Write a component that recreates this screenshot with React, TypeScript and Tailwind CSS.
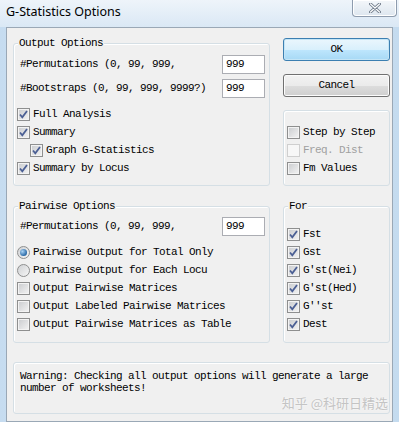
import React from "react";

const mono = "font-['Liberation_Mono',monospace] text-[11px] tracking-[-0.6px] text-black";

function Check({ checked, disabled }: { checked?: boolean; disabled?: boolean }) {
  return (
    <span
      className={`flex h-[13px] w-[13px] shrink-0 items-center justify-center border ${
        disabled
          ? "border-[#cfcfcf] bg-[#f7f7f7]"
          : "border-[#8e8f8f] bg-[linear-gradient(135deg,#c9cbce,#f4f4f4)] shadow-[inset_0_0_0_1px_#f3f3f3]"
      }`}
    >
      {checked && (
        <svg width="11" height="11" viewBox="0 0 11 11">
          <path d="M2 5.5 L4.3 8.3 L9 2" fill="none" stroke="#4b5f94" strokeWidth="1.8" />
        </svg>
      )}
    </span>
  );
}

function Radio({ checked }: { checked?: boolean }) {
  return (
    <span className="flex h-[13px] w-[13px] shrink-0 items-center justify-center rounded-full border border-[#8e8f8f] bg-[linear-gradient(135deg,#cfd1d4,#f6f6f6)]">
      {checked && (
        <span className="h-[7px] w-[7px] rounded-full bg-[radial-gradient(circle_at_35%_35%,#a9d3f5,#2a6aa8_70%,#1b4d82)]" />
      )}
    </span>
  );
}

function CheckRow({
  label,
  checked,
  disabled,
  indent,
}: {
  label: string;
  checked?: boolean;
  disabled?: boolean;
  indent?: boolean;
}) {
  return (
    <div className={`flex h-[18px] items-center gap-[3px] ${indent ? "pl-[16px]" : "pl-[3px]"}`}>
      <Check checked={checked} disabled={disabled} />
      <span className={`${mono} ${disabled ? "!text-[#a0a0a0]" : ""}`}>{label}</span>
    </div>
  );
}

function RadioRow({ label, checked }: { label: string; checked?: boolean }) {
  return (
    <div className="flex h-[18px] items-center gap-[3px] pl-[3px]">
      <Radio checked={checked} />
      <span className={mono}>{label}</span>
    </div>
  );
}

function Group({
  label,
  className,
  children,
}: {
  label?: string;
  className: string;
  children: React.ReactNode;
}) {
  return (
    <div
      className={`relative rounded-[3px] border border-[#d5dfe5] shadow-[inset_1px_1px_0_#ffffff] ${className}`}
    >
      {label && (
        <span className={`${mono} absolute -top-[8px] left-[4px] bg-[#f0f0f0] px-[1px] leading-[14px]`}>
          {label}
        </span>
      )}
      {children}
    </div>
  );
}

function NumRow({ label }: { label: string }) {
  return (
    <div className="flex h-[19px] items-center justify-between pl-[6px] pr-[4px]">
      <span className={mono}>{label}</span>
      <div className="flex h-[19px] w-[43px] items-center border border-[#abadb3] bg-white pl-[3px]">
        <span className={mono}>999</span>
      </div>
    </div>
  );
}

export default function App() {
  return (
    <div className="h-[422px] w-[399px] overflow-hidden bg-[linear-gradient(90deg,#c6dcf0,#d8e8f6_30%,#cfe2f3_70%,#c4dbef)]">
      <div className="flex h-[27px] items-start justify-between bg-[linear-gradient(180deg,#eef4fa,#dae8f5)]">
        <span className="pl-[6px] pt-[3px] font-['Noto_Sans',sans-serif] text-[12.5px] leading-[18px] text-black">
          G-Statistics Options
        </span>
        <div className="mr-[2px] flex h-[17px] w-[45px] items-center justify-center rounded-b-[4px] border border-t-0 border-[#8e9cae] bg-[linear-gradient(180deg,#f4f7fa,#dde6ef)] shadow-[inset_0_0_0_1px_#ffffff]">
          <svg width="12" height="10" viewBox="0 0 12 10">
            <path d="M1.5 1 L10.5 9 M10.5 1 L1.5 9" stroke="#6f7b8a" strokeWidth="3" strokeLinecap="round" />
            <path d="M1.5 1 L10.5 9 M10.5 1 L1.5 9" stroke="#ffffff" strokeWidth="1.2" strokeLinecap="round" />
          </svg>
        </div>
      </div>

      <div className="mx-[6px] h-[395px] border border-[#9aa8b6] bg-[#f0f0f0] pl-[6px]">
        <div className="flex gap-[13px]">
          <div className="flex w-[257px] flex-col">
            <Group label="Output Options" className="mt-[15px] h-[143px] pt-[11px]">
              <NumRow label="#Permutations (0, 99, 999," />
              <div className="mt-[5px]">
                <NumRow label="#Bootstraps (0, 99, 999, 9999?)" />
              </div>
              <div className="mt-[7px]">
                <CheckRow label="Full Analysis" checked />
                <CheckRow label="Summary" checked />
                <CheckRow label="Graph G-Statistics" checked indent />
                <CheckRow label="Summary by Locus" checked />
              </div>
            </Group>
            <Group label="Pairwise Options" className="mt-[20px] h-[137px] pt-[10px]">
              <NumRow label="#Permutations (0, 99, 999," />
              <div className="mt-[7px]">
                <RadioRow label="Pairwise Output for Total Only" checked />
                <RadioRow label="Pairwise Output for Each Locu" />
                <CheckRow label="Output Pairwise Matrices" />
                <CheckRow label="Output Labeled Pairwise Matrices" />
                <CheckRow label="Output Pairwise Matrices as Table" />
              </div>
            </Group>
          </div>

          <div className="flex w-[107px] flex-col">
            <button
              type="button"
              className={`${mono} mt-[10px] h-[23px] rounded-[3px] border border-[#3c7fb1] bg-[linear-gradient(180deg,#eaf6fd_0%,#d9f0fc_50%,#bee6fd_51%,#a7d9f5_100%)] shadow-[inset_0_0_0_1px_#c4e5f6]`}
            >
              OK
            </button>
            <button
              type="button"
              className={`${mono} mt-[13px] h-[23px] rounded-[3px] border border-[#707070] bg-[linear-gradient(180deg,#f2f2f2_0%,#ebebeb_50%,#dddddd_51%,#cfcfcf_100%)] shadow-[inset_0_0_0_1px_#fcfcfc]`}
            >
              Cancel
            </button>
            <Group className="mt-[13px] h-[76px] pt-[12px]">
              <CheckRow label="Step by Step" />
              <CheckRow label="Freq. Dist" disabled />
              <CheckRow label="Fm Values" />
            </Group>
            <Group label="For" className="mt-[20px] h-[137px] pt-[18px]">
              <CheckRow label="Fst" checked />
              <CheckRow label="Gst" checked />
              <CheckRow label="G'st(Nei)" checked />
              <CheckRow label="G'st(Hed)" checked />
              <CheckRow label="G''st" checked />
              <CheckRow label="Dest" checked />
            </Group>
          </div>
        </div>

        <Group className="mt-[19px] h-[52px] w-[377px] pl-[6px] pt-[7px]">
          <p className={`${mono} leading-[12px]`}>
            Warning: Checking all output options will generate a large
            <br />
            number of worksheets!
          </p>
          <span className="absolute bottom-[2px] right-[1px] font-['Noto_Sans_CJK_SC',sans-serif] text-[13px] leading-[16px] text-[#c4c4c4] [text-shadow:0_0_2px_#ffffff]">
            知乎 @科研日精选
          </span>
        </Group>
      </div>
    </div>
  );
}
